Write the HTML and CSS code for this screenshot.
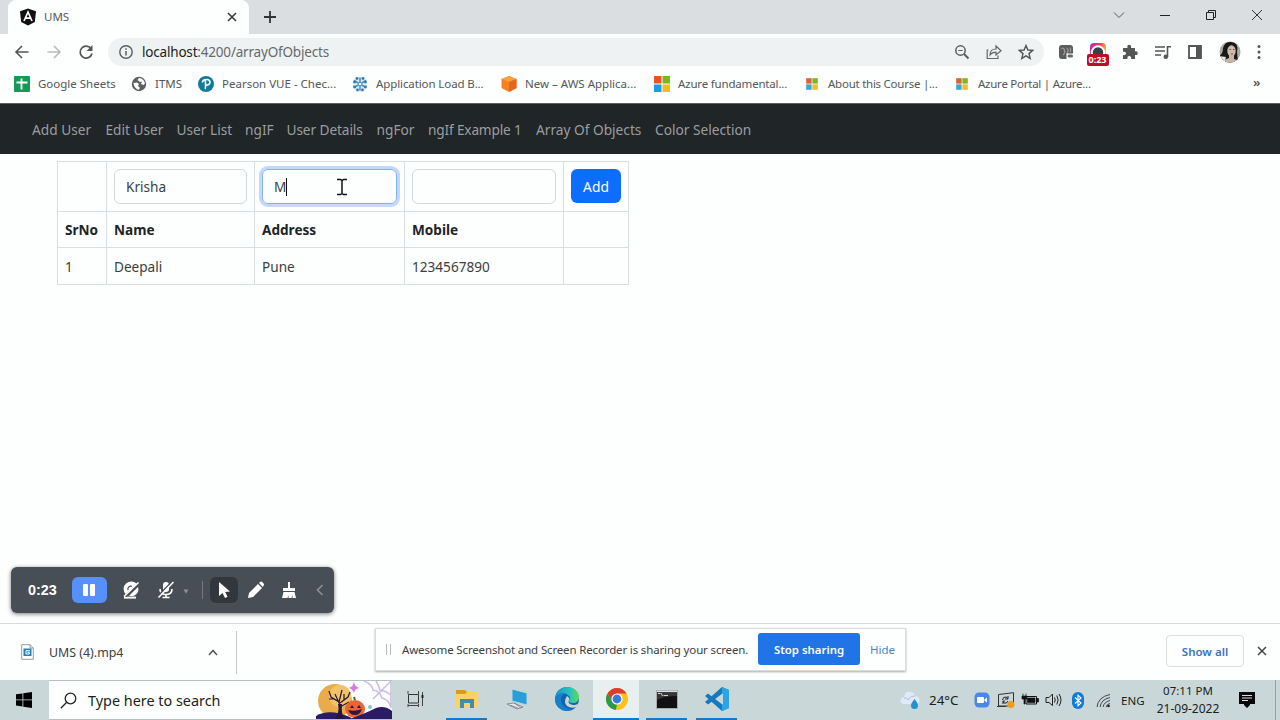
FILE: index.html
```html
<!DOCTYPE html>
<html lang="en">
<head>
    <meta charset="UTF-8">
    <meta name="viewport" content="width=device-width, initial-scale=1.0">
    <title>UMS</title>
    <link rel="stylesheet" href="styles.css">
</head>
<body>

    <div class="tabStrip">
        <div class="tab">
            <svg width="16" height="18" viewBox="0 0 16 18"><path d="M8 0.500L16 3.300L14.800 14L8 17.500L1.200 14L0 3.300Z" fill="#111"/><path d="M4 13L8 4L12 13M5.500 10.200H10.500" fill="none" stroke="#fff" stroke-width="1.700"/></svg>
            <span class="tabTitle">UMS</span>
            <svg width="10" height="10" viewBox="0 0 10 10"><path d="M1 1L9 9M9 1L1 9" stroke="#333" stroke-width="1.500"/></svg>
        </div>
        <svg class="newTab" width="14" height="14" viewBox="0 0 14 14"><path d="M7 1V13M1 7H13" stroke="#333" stroke-width="1.800"/></svg>
        <div class="windowButtons">
            <svg width="12" height="12" viewBox="0 0 12 12"><path d="M1 3.500L6 8.500L11 3.500" fill="none" stroke="#555"/></svg>
            <svg width="12" height="12" viewBox="0 0 12 12"><path d="M1 6.500H11" stroke="#222"/></svg>
            <svg width="12" height="12" viewBox="0 0 12 12"><path d="M1.500 3.500H8.500V10.500H1.500ZM3.500 3.500V1.500H10.500V8.500H8.500" fill="none" stroke="#222"/></svg>
            <svg width="12" height="12" viewBox="0 0 12 12"><path d="M1 1L11 11M11 1L1 11" stroke="#333"/></svg>
        </div>
    </div>

    <div class="toolbar">
        <svg width="16" height="16" viewBox="0 0 16 16"><path d="M14.500 8H2.500M8 2L2 8L8 14" fill="none" stroke="#555" stroke-width="1.600"/></svg>
        <svg width="16" height="16" viewBox="0 0 16 16"><path d="M1.500 8H13.500M8 2L14 8L8 14" fill="none" stroke="#b8bbbd" stroke-width="1.600"/></svg>
        <svg width="16" height="16" viewBox="0 0 16 16"><path d="M13 4.500A6 6 0 1 0 14 9.500" fill="none" stroke="#555" stroke-width="1.700"/><path d="M14.500 1V7H8.500Z" fill="#555"/></svg>
        <div class="addressBar">
            <svg width="16" height="16" viewBox="0 0 16 16"><circle cx="8" cy="8" r="6.200" fill="none" stroke="#5a5d60" stroke-width="1.400"/><path d="M8 7V11.500M8 4.300V5.800" stroke="#5a5d60" stroke-width="1.500"/></svg>
            <span class="url"><b>localhost</b>:4200/arrayOfObjects</span>
            <svg width="16" height="16" viewBox="0 0 16 16"><circle cx="6.500" cy="6.500" r="4.700" fill="none" stroke="#5a5d60" stroke-width="1.500"/><path d="M10 10L14.500 14.500" stroke="#5a5d60" stroke-width="1.900"/><path d="M4.300 6.500H8.700" stroke="#5a5d60"/></svg>
            <svg width="16" height="16" viewBox="0 0 16 16"><path d="M2.500 6H1.200V14.500H12V11.500M4 11C4 7 6.500 5 10 5V2L15 6.700L10 11V8.200C7.500 8.200 5.500 9 4 11Z" fill="none" stroke="#666" stroke-width="1.200"/></svg>
            <svg width="16" height="16" viewBox="0 0 16 16"><path d="M8 1.500L9.900 6L14.700 6.400L11 9.600L12.200 14.400L8 11.800L3.800 14.400L5 9.600L1.300 6.400L6.100 6Z" fill="none" stroke="#555" stroke-width="1.400"/></svg>
        </div>
        <div class="extensions">
            <svg width="16" height="16" viewBox="0 0 16 16"><rect x="1" y="1" width="14" height="14" rx="3" fill="#5c5c5c"/><path d="M3.500 5Q5.500 3 6.500 6T5 11M8.500 4Q11.500 5 9 10M12.500 3.500V8" fill="none" stroke="#999" stroke-width="1.300"/><rect x="8.500" y="9.500" width="7.500" height="6.500" fill="#fdfefe"/><rect x="9.500" y="10.500" width="5.500" height="3" rx="1.500" fill="#666"/></svg>
            <div class="recorder">
                <svg width="18" height="18" viewBox="0 0 18 18"><defs><linearGradient id="rec" x2="1" y2=".4"><stop stop-color="#b72bb4"/><stop offset=".55" stop-color="#e63b64"/><stop offset="1" stop-color="#ffb52c"/></linearGradient></defs><rect x="1" width="16" height="17" rx="4" fill="url(#rec)"/><circle cx="9" cy="9.500" r="7.200" fill="#fff"/><circle cx="9" cy="9.500" r="5.200" fill="#344"/></svg>
                <span class="recTime">0:23</span>
            </div>
            <svg width="16" height="16" viewBox="0 0 16 16"><path d="M1 4H5.500C4.800 1.800 6 .8 7.200 .8S9.700 1.800 9 4H13V7.500C15 7 15.700 8 15.700 9.200S15 11.500 13 11V15H9C9.500 12.800 8.500 12 7.200 12S5 13 5.500 15H1V11C3 11.500 4 10.500 4 9.300S3 7.300 1 7.800Z" fill="#555"/></svg>
            <svg width="18" height="16" viewBox="0 0 18 16"><path d="M1 3H11M1 7H11M1 11H7" stroke="#555" stroke-width="1.500"/><path d="M13.500 13V2.800H17" fill="none" stroke="#555" stroke-width="1.600"/><circle cx="11.800" cy="12.700" r="2.300" fill="#555"/></svg>
            <svg width="16" height="16" viewBox="0 0 16 16"><path d="M2 2H14V14H2Z" fill="none" stroke="#555" stroke-width="1.800"/><path d="M9 2H14V14H9Z" fill="#555"/></svg>
            <svg width="22" height="22" viewBox="0 0 22 22"><defs><clipPath id="face"><circle cx="11" cy="11" r="10.500"/></clipPath></defs><g clip-path="url(#face)"><rect width="22" height="22" fill="#aaa9a3"/><path d="M0 22V15Q4 13 4 7Q6 0 12 1Q20 1 18 11Q18 17 20 22Z" fill="#191918"/><ellipse cx="12.500" cy="10" rx="4.200" ry="5.800" fill="#d0b9ad"/><path d="M10 14H15V18L22 20V22H5V19L10 17Z" fill="#c9b5aa"/><path d="M0 15L7 16L5 22H0Z" fill="#e6e6e3"/><path d="M10.500 8.500H12M14 8.500H15.500M12 13H14" stroke="#654"/></g></svg>
            <svg width="6" height="16" viewBox="0 0 6 16"><circle cx="3" cy="2.500" r="1.500" fill="#555"/><circle cx="3" cy="8" r="1.500" fill="#555"/><circle cx="3" cy="13.500" r="1.500" fill="#555"/></svg>
        </div>
    </div>

    <div class="bookmarks">
        <div class="bookmark">
            <svg width="16" height="16" viewBox="0 0 16 16"><rect width="16" height="16" rx="1" fill="#159957"/><path d="M7.500 2.500V13.500M2.500 6.500H13.500" stroke="#fff" stroke-width="1.800"/></svg>
            <span>Google Sheets</span>
        </div>
        <div class="bookmark">
            <svg width="16" height="16" viewBox="0 0 16 16"><circle cx="8" cy="8" r="7.200" fill="#5c5f62"/><path d="M2.500 7L6 6.500L8 8L7 10L9 12L7.500 14Q3 12 2.500 7ZM8 2L6.500 4L9 6L11 5.500L10 8L12.500 9L14 7.500Q13 2.500 8 2Z" fill="#fff"/></svg>
            <span>ITMS</span>
        </div>
        <div class="bookmark">
            <svg width="16" height="16" viewBox="0 0 16 16"><circle cx="8" cy="8" r="8" fill="#137b9a"/><path d="M7 13Q8 12 7.300 4.500M4.500 6.500Q4.500 3.500 8.500 3.500Q12 3.500 12 6.300Q12 9.200 7.500 9.300" fill="none" stroke="#fff" stroke-width="1.600"/></svg>
            <span>Pearson VUE - Chec...</span>
        </div>
        <div class="bookmark">
            <svg width="16" height="16" viewBox="0 0 16 16"><circle cx="8" cy="8" r="7.500" fill="#d9eef6"/><path d="M8 1.500V14.500M2 4.500L14 11.500M14 4.500L2 11.500" stroke="#4c8ec3" stroke-width="1.600"/><g fill="#3977af"><circle cx="5" cy="2.500" r="1.400"/><circle cx="11" cy="2.500" r="1.400"/><circle cx="2.500" cy="6" r="1.400"/><circle cx="13.500" cy="6" r="1.400"/><circle cx="2.500" cy="11" r="1.400"/><circle cx="13.500" cy="11" r="1.400"/><circle cx="5.500" cy="14" r="1.400"/><circle cx="10.500" cy="14" r="1.400"/></g><circle cx="8" cy="8" r="1.300" fill="#fff"/></svg>
            <span class="tight">Application Load B...</span>
        </div>
        <div class="bookmark">
            <svg width="16" height="16" viewBox="0 0 16 16"><path d="M8 0L15.500 3V12L8 16L.5 12V3Z" fill="#f58220"/><path d="M8 0L15.500 3L8 6L.5 3Z" fill="#f7a044"/><path d="M8 6L15.500 3V12L8 16Z" fill="#e8651e"/></svg>
            <span>New – AWS Applica...</span>
        </div>
        <div class="bookmark">
            <svg width="16" height="16" viewBox="0 0 16 16"><path d="M0 0H7.500V7.500H0Z" fill="#e8532a"/><path d="M8.500 0H16V7.500H8.500Z" fill="#7fb71b"/><path d="M0 8.500H7.500V16H0Z" fill="#169fe2"/><path d="M8.500 8.500H16V16H8.500Z" fill="#f8b91b"/></svg>
            <span class="tighter">Azure fundamental...</span>
        </div>
        <div class="bookmark">
            <svg width="16" height="16" viewBox="-3 -3 22 22"><path d="M0 0H7.500V7.500H0Z" fill="#d9603b"/><path d="M8.500 0H16V7.500H8.500Z" fill="#7fb71b"/><path d="M0 8.500H7.500V16H0Z" fill="#3fa4d2"/><path d="M8.500 8.500H16V16H8.500Z" fill="#f0bc36"/></svg>
            <span class="tightest">About this Course |...</span>
        </div>
        <div class="bookmark">
            <svg width="16" height="16" viewBox="-3 -3 22 22"><path d="M0 0H7.500V7.500H0Z" fill="#d9603b"/><path d="M8.500 0H16V7.500H8.500Z" fill="#7fb71b"/><path d="M0 8.500H7.500V16H0Z" fill="#3fa4d2"/><path d="M8.500 8.500H16V16H8.500Z" fill="#f0bc36"/></svg>
            <span class="tightest">Azure Portal | Azure...</span>
        </div>
        <span class="moreBookmarks">»</span>
    </div>

    <div class="page">
        <nav class="navbar">
            <a>Add User</a>
            <a>Edit User</a>
            <a>User List</a>
            <a>ngIF</a>
            <a class="tight">User Details</a>
            <a>ngFor</a>
            <a class="tighter">ngIf Example 1</a>
            <a>Array Of Objects</a>
            <a>Color Selection</a>
        </nav>

        <table class="userTable">
            <colgroup><col class="colNo"><col class="colName"><col class="colAddress"><col class="colMobile"><col class="colAction"></colgroup>
            <tr class="rowForm">
                <td></td>
                <td><div class="field">Krisha</div></td>
                <td><div class="field focused">M<span class="caret"></span></div></td>
                <td><div class="field"></div></td>
                <td><button class="btnAdd">Add</button></td>
            </tr>
            <tr class="rowHead">
                <th>SrNo</th>
                <th>Name</th>
                <th>Address</th>
                <th>Mobile</th>
                <th></th>
            </tr>
            <tr class="rowData">
                <td>1</td>
                <td>Deepali</td>
                <td>Pune</td>
                <td>1234567890</td>
                <td></td>
            </tr>
        </table>

        <svg class="textCursor" width="12" height="18" viewBox="0 0 12 18"><path d="M1 1.500H4.500L6 2.500L7.500 1.500H11M6 2V16M1 16.500H4.500L6 15.500L7.500 16.500H11" fill="none" stroke="#111" stroke-width="1.500"/></svg>

        <div class="recordPanel">
            <span class="panelTime">0:23</span>
            <div class="pause"><i></i><i></i></div>
            <svg class="webcam" width="18" height="18" viewBox="0 0 18 18"><path d="M15 3A7 7 0 1 0 3.500 13Z" fill="#fff"/><path d="M16 6A7 7 0 0 1 7 14.800Z" fill="#fff"/><path d="M2 16.600H14" stroke="#fff" stroke-width="2"/><path d="M6 9A3 3 0 0 1 10 5.300M16.500 3L4 15.500" fill="none" stroke="#484e55" stroke-width="1.200"/><path d="M16.500 1.500L2 15.500" stroke="#fff" stroke-width="1.600"/></svg>
            <svg class="mic" width="18" height="18" viewBox="0 0 18 18"><rect x="6" y="1" width="6" height="10" rx="3" fill="#fff"/><path d="M3 8Q3 13.500 9 13.500Q15 13.500 15 8M9 13.500V17M5.500 16.500H12.500" fill="none" stroke="#fff" stroke-width="1.600"/><path d="M15.500 0L1 15" stroke="#484e55" stroke-width="1.500"/><path d="M16.500 1L1.500 16.500" stroke="#fff" stroke-width="1.600"/></svg>
            <svg class="micMenu" width="6" height="5" viewBox="0 0 6 5"><path d="M.5 .5H5.500L3 4.800Z" fill="#8d9196"/></svg>
            <i class="panelLine"></i>
            <div class="pointer"><svg width="14" height="18" viewBox="0 0 14 18"><path d="M2 1V15L5.500 12L8 17L10.500 15.800L8.200 11L13 10.500Z" fill="#fff"/></svg></div>
            <svg class="pencil" width="18" height="18" viewBox="0 0 18 18"><path d="M1 17L2 12L11 3L15 7L6 16ZM12 2L13.500 .7Q14.500 .3 15.500 1.300L16.800 2.700Q17.500 3.700 16.500 4.800L15.800 6Z" fill="#fff"/></svg>
            <svg class="broom" width="16" height="18" viewBox="0 0 16 18"><path d="M7 1H9V7H14V10H2V7H7ZM2.500 11H13.500L15 17H11.500V14L10.500 17H7.500V14L6.500 17H1Z" fill="#fff"/></svg>
            <svg class="collapse" width="8" height="12" viewBox="0 0 8 12"><path d="M6.500 1L1.500 6L6.500 11" fill="none" stroke="#8d9196" stroke-width="1.600"/></svg>
        </div>
    </div>

    <div class="downloads">
        <div class="download">
            <svg width="13" height="16" viewBox="0 0 13 16"><path d="M.7 .7H9L12.300 4V15.300H.7Z" fill="#fff" stroke="#9b9b9b"/><path d="M9 .7V4H12.300" fill="none" stroke="#9b9b9b"/><rect x="2.500" y="4.500" width="8" height="7.500" fill="#2184b8"/><path d="M9 6.700H5V10H8.300V8.300H6.500" fill="none" stroke="#fff"/></svg>
            <span class="fileName">UMS (4).mp4</span>
            <svg width="10" height="7" viewBox="0 0 10 7"><path d="M1 6L5 1.500L9 6" fill="none" stroke="#555" stroke-width="1.500"/></svg>
        </div>
        <button class="showAll">Show all</button>
        <svg class="closeBar" width="10" height="10" viewBox="0 0 10 10"><path d="M1 1L9 9M9 1L1 9" stroke="#444" stroke-width="1.500"/></svg>
        <div class="sharing">
            <i class="grip"></i>
            <span class="shareText">Awesome Screenshot and Screen Recorder is sharing your screen.</span>
            <button class="stopSharing">Stop sharing</button>
            <span class="hide">Hide</span>
        </div>
    </div>

    <div class="taskbar">
        <div class="start"><svg width="16" height="16" viewBox="0 0 16 16"><path d="M0 2.300L6.500 1.400V7.500H0ZM7.300 1.300L16 0V7.500H7.300ZM0 8.300H6.500V14.500L0 13.600ZM7.300 8.300H16V16L7.300 14.700Z"/></svg></div>
        <div class="search">
            <svg width="17" height="17" viewBox="0 0 17 17"><circle cx="10.500" cy="6.500" r="5.300" fill="none" stroke="#222" stroke-width="1.300"/><path d="M6.700 10.300L.8 16.200" stroke="#222" stroke-width="1.300"/></svg>
            <span class="searchText">Type here to search</span>
            <svg class="halloween" width="76" height="38" viewBox="316 681 76 38">
                <circle cx="335" cy="701" r="17" fill="#e8ac4b"/><circle cx="340" cy="696" r="11" fill="#f1c367"/>
                <path d="M316 716Q329 708 350 717L352 719H316Z" fill="#2d1a64"/>
                <path d="M338 718Q341 707 339 702L331 697L329 691M339 703L335 694M339 702L342 690M340 703L348 697L350 692M344 700V694M334 699H329M340 707L349 702" fill="none" stroke="#241640" stroke-width="1.200"/><path d="M335 719Q340 712 338 704H342Q341 713 344 719Z" fill="#241640"/>
                <ellipse cx="355" cy="709" rx="10" ry="9" fill="#ea6534"/><path d="M355 700L354 697" stroke="#44672c" stroke-width="2"/><path d="M350 708L352 705L354 708ZM357 708L359 705L361 708ZM348 710Q355 712 362 709Q360 715 355 715Q350 715 348 710Z" fill="#35163c"/>
                <path d="M354 682L355.500 686L359 688L355.500 689.500L354 693L352 689.500L349 688L352.500 686Z" fill="#d978e5"/>
                <path d="M364 681Q372 684 373 690Q380 691 382 698Q388 699 391 707M391 681L373 699M391 681V708M376 681Q379 686 380 690Q386 691 391 695" fill="none" stroke="#cbbbe0" stroke-width="1.500"/>
                <circle cx="370" cy="707" r="2" fill="#78c4cf"/><path d="M350 719Q366 713 376 708Q385 705 392 711V719Z" fill="#2d1a64"/>
            </svg>
        </div>
        <div class="apps">
            <div class="app"><svg width="18" height="18" viewBox="0 0 18 18"><path d="M2.500 4.500H12.500V13H2.500Z" fill="none" stroke="#333"/><path d="M2 1V4M12.500 1V4M2 14V17M12.500 14V17M2 15.500H12M16.500 2V16" stroke="#444"/><path d="M15.500 5H17.500V8H15.500Z" fill="#222"/></svg></div>
            <div class="app open"><svg width="22" height="20" viewBox="0 0 22 20"><path d="M0 1H9L11 3H22V19H0Z" fill="#ffd35d"/><path d="M0 1H9L11 3L9 5H0Z" fill="#d99b18"/><path d="M4 19V10H18V19H14V14H8V19Z" fill="#3e8db7"/></svg></div>
            <div class="app"><svg width="24" height="24" viewBox="0 0 24 24"><path d="M7 2L22 6V18L7 14Z" fill="#299ed8" stroke="#b7d8e5"/><path d="M2 17L9 16L18 20L12 22ZM5 18L13 21M9 16L16 21" fill="#e9eeee" stroke="#778" stroke-width=".8"/></svg></div>
            <div class="app"><svg width="24" height="24" viewBox="0 0 24 24"><defs><linearGradient id="edgeTop"><stop stop-color="#1694d1"/><stop offset=".6" stop-color="#24c4bd"/><stop offset="1" stop-color="#62d957"/></linearGradient></defs><circle cx="12" cy="12" r="12" fill="#1264b0"/><path d="M0 12C1 4 6 0 12 0C19 0 24 5 24 10.500C24 14 21 16 18 16Q13 16 14 13Q16 11 14 9Q11 5 5 7Q1 9 0 12Z" fill="url(#edgeTop)"/><path d="M0 12Q3 5 9 7Q4 11 7 17Q10 22 17 22Q13 25 8 23Q0 20 0 12Z" fill="#1681cb"/><path d="M12 9Q15 11 14 13Q12 17 18 18Q22 18 23 16L22 20Q16 22 12 19Q8 15 12 9Z" fill="#c9d5d7"/></svg></div>
            <div class="app open active"><svg width="22" height="22" viewBox="0 0 22 22"><circle cx="11" cy="11" r="11" fill="#fbc116"/><path d="M1.500 5.500A11 11 0 0 1 20.500 5.500H11L6.300 13.800Z" fill="#df3c30"/><path d="M1.500 5.500L6.300 13.800Q8 16.500 11 16.500L9.800 22A11 11 0 0 1 1.500 5.500Z" fill="#279b4b"/><circle cx="11" cy="11" r="5.600" fill="#fff"/><circle cx="11" cy="11" r="4.400" fill="#367be1"/></svg></div>
            <div class="app open"><svg width="22" height="19" viewBox="0 0 22 19"><rect x=".5" y=".5" width="21" height="18" fill="#111" stroke="#aaa"/><path d="M1 1.500H21" stroke="#ddd" stroke-width="1.500"/><path d="M2 3.500H4.500M5 3L6.500 6M7.500 5.500H12" stroke="#ccc"/><path d="M1 10Q8 6 21 6V3H1Z" fill="#fff" opacity=".16"/></svg></div>
            <div class="app open"><svg width="24" height="24" viewBox="0 0 24 24"><path d="M17 0L24 3V21L17 24L0 9L3 6.500L18 18V6L3 17.500L0 15Z" fill="#1579be"/><path d="M17 0L24 3V21L17 24V17.500L18 18V6L17 6.700Z" fill="#2ba5e5"/></svg></div>
        </div>
        <div class="tray">
            <svg class="cloud" width="20" height="20" viewBox="0 0 20 20"><path d="M3 14Q-1 12 1 9Q2 7 4 7Q5 1 10 2Q14 2 15 6Q20 7 19.500 11Q19 14 15 14Z" fill="#dfe9f7"/><path d="M4 8Q7 7 8 10Q11 5 15 6" fill="none" stroke="#a9bfe4"/><path d="M14.500 9Q18 13 18 15.500Q18 19 14.500 19Q11 19 11 15.500Q11 13 14.500 9Z" fill="#1c94d1"/></svg>
            <span class="degrees">24°C</span>
            <svg width="16" height="16" viewBox="0 0 16 16"><rect x=".5" y=".5" width="15" height="15" rx="4.500" fill="#4b86e8"/><rect x="3" y="5" width="7" height="6" rx="1" fill="#fff"/><path d="M10.500 7.500L13 5.500V10.500L10.500 8.800Z" fill="#fff"/></svg>
            <svg width="18" height="16" viewBox="0 0 18 16"><path d="M1.500 2.500L16.500 .7V14H1.500ZM0 14.500H9" fill="none" stroke="#333"/><path d="M5.500 8Q6 4.500 9 5L11 6.500M11 4V7H8M11 9Q10 12 7 11L6 9.500M6 12V9H8" fill="none" stroke="#222"/><circle cx="14" cy="12.500" r="3.500" fill="#f49a13"/></svg>
            <svg class="battery" width="18" height="16" viewBox="0 0 18 16"><path d="M5 4.500H15.500V12H5Z" fill="none" stroke="#111"/><path d="M6.500 6H14V10.500H6.500ZM16 6.500H17.500V10H16ZM1 4H6V7H4V12H3V7H1ZM2 1.500V4M5 1.500V4" fill="#111" stroke="#111" stroke-width=".7"/></svg>
            <svg class="speaker" width="17" height="16" viewBox="0 0 17 16"><path d="M1 5.500H4L7.500 2V13.500L4 10.500H1ZM9.500 5.500Q11 8 9.500 10.500M11.800 3.500Q14.500 8 11.800 12.500M14 2Q18 8 14 14" fill="none" stroke="#222"/></svg>
            <svg class="bluetooth" width="12" height="17" viewBox="0 0 12 17"><rect width="12" height="17" rx="6" fill="#117bd2"/><path d="M3 5.500L9 11L6 13.800V3.200L9 6L3 11.500" fill="none" stroke="#fff" stroke-width="1.100"/></svg>
            <svg class="wifi" width="15" height="15" viewBox="0 0 15 15"><path d="M1 14Q2 4 14 1.500M4 14Q5 6.500 14 4.500M7 14Q8 9 14 7.500M10 14Q11 11 14 10.500" fill="none" stroke="#444"/><circle cx="12.500" cy="13" r="1.300" fill="#222"/></svg>
            <span class="lang">ENG</span>
            <div class="clock"><span>07:11 PM</span><span class="date">21-09-2022</span></div>
            <svg class="notify" width="16" height="16" viewBox="0 0 16 16"><path d="M0 0H16V12H11V13L8 16L5 13V12H0Z" fill="#080808"/><path d="M3 3.500H13M3 6H13M3 8.500H9" stroke="#ddd"/></svg>
            <i class="desktopLine"></i>
        </div>
    </div>

</body>
</html>
```
FILE: styles.css
```css
* {
    box-sizing: border-box;
}

body {
    margin: 0;
    width: 1280px;
    height: 720px;
    overflow: hidden;
    display: flex;
    flex-direction: column;
    background-color: #fdfefe;
    font-family: "Noto Sans", "Open Sans", sans-serif;
    color: #3c4043;
    white-space: nowrap;
}

svg {
    display: block;
    flex: none;
}

button {
    font-family: inherit;
    padding: 0;
    border: none;
    white-space: nowrap;
}

.tight {
    letter-spacing: -0.1px;
}

.tighter {
    letter-spacing: -0.18px;
}

.tightest {
    letter-spacing: -0.25px;
}

.tabStrip {
    height: 34px;
    flex: none;
    display: flex;
    align-items: center;
    padding-left: 8px;
    background-color: #dadee1;
}

.tab {
    width: 241px;
    height: 34px;
    display: flex;
    align-items: center;
    padding: 0 12px;
    border-radius: 8px 8px 0 0;
    background-color: #fdfefe;
}

.tabTitle {
    flex-grow: 1;
    margin: -1px 0 0 8px;
    font-size: 11.5px;
    color: #55595c;
}

.newTab {
    margin-left: 14px;
}

.windowButtons {
    display: flex;
    gap: 34px;
    margin-left: auto;
    padding-right: 17px;
    padding-bottom: 5px;
}

.toolbar {
    height: 36px;
    flex: none;
    display: flex;
    align-items: center;
    gap: 16px;
    padding-left: 14px;
}

.addressBar {
    width: 936px;
    height: 28px;
    display: flex;
    align-items: center;
    gap: 16px;
    margin-left: -2px;
    padding: 0 10px;
    border-radius: 14px;
    background-color: #eff2f2;
}

.url {
    flex-grow: 1;
    margin: -1px 0 0 -8px;
    font-size: 13.5px;
    letter-spacing: -0.19px;
    color: #65696c;
}

.url b {
    font-weight: normal;
    color: #222;
}

.extensions {
    display: flex;
    align-items: center;
    gap: 15.5px;
    margin-left: -2px;
}

.recorder {
    position: relative;
    width: 17px;
    height: 18px;
}

.recorder svg {
    margin-left: -1px;
}

.recTime {
    position: absolute;
    left: -3px;
    top: 11px;
    width: 22px;
    height: 12px;
    border-radius: 2px;
    background-color: #c00d25;
    color: #fff;
    font-size: 9px;
    font-weight: bold;
    line-height: 12px;
    text-align: center;
}

.bookmarks {
    height: 34px;
    flex: none;
    display: grid;
    grid-template-columns: 117px 67px 154px 149px 153px 150px 150px 299px auto;
    align-items: center;
    padding: 0 0 6px 14px;
    border-bottom: 1px solid #5b5f61;
    font-size: 11.5px;
    color: #53575a;
}

.bookmark {
    display: flex;
    align-items: center;
    gap: 8px;
}

.moreBookmarks {
    margin-top: -3px;
    font-size: 13px;
    font-weight: 600;
}

.page {
    position: relative;
    height: 519px;
    flex: none;
    overflow: hidden;
}

.navbar {
    height: 50px;
    display: grid;
    grid-template-columns: 73.5px 71px 68.5px 41.500px 90px 51.500px 108px 119px auto;
    align-items: center;
    padding-left: 32px;
    background-color: #202527;
    color: #9b9e9f;
    font-size: 13.7px;
}

.userTable {
    width: 572px;
    margin: 7px 0 0 57px;
    table-layout: fixed;
    border-collapse: collapse;
    color: #3a3e40;
    font-size: 13.6px;
    line-height: 21px;
}

.colNo { width: 49px; }
.colName { width: 148px; }
.colAddress { width: 150px; }
.colMobile { width: 159px; }
.colAction { width: 65px; }

.rowForm { height: 50px; }
.rowHead { height: 36px; }
.rowData { height: 37px; }

.userTable td,
.userTable th {
    padding: 0 7px;
    border: 1px solid #d9dfe1;
    text-align: left;
}

.userTable th {
    color: #202427;
}

.field {
    height: 35px;
    display: flex;
    align-items: center;
    padding-left: 11px;
    border: 1px solid #d3d8df;
    border-radius: 6px;
}

.focused {
    border-color: #86b0f5;
    box-shadow: 0 0 0 3px #c4d8fa;
}

.caret {
    width: 1px;
    height: 18px;
    background-color: #111;
}

.btnAdd {
    display: block;
    width: 50px;
    height: 34px;
    margin-top: -1px;
    border-radius: 6px;
    background-color: #0d6efd;
    color: #fff;
    font-size: 13.8px;
}

.textCursor {
    position: absolute;
    left: 336px;
    top: 74px;
}

.recordPanel {
    position: absolute;
    left: 11px;
    top: 463px;
    width: 323px;
    height: 46px;
    display: flex;
    align-items: center;
    padding: 0 10px 0 17px;
    border-radius: 6px;
    background-color: #484e55;
    box-shadow: 0 1px 4px #777;
}

.panelTime {
    width: 44px;
    color: #fff;
    font-family: "Liberation Sans", sans-serif;
    font-size: 14.4px;
    font-weight: bold;
}

.pause {
    width: 36px;
    height: 26px;
    display: flex;
    align-items: center;
    justify-content: center;
    gap: 2px;
    border-radius: 6px;
    background-color: #5590fc;
}

.pause i {
    width: 5px;
    height: 12px;
    border-radius: 1px;
    background-color: #fff;
}

.webcam { margin-left: 15px; }
.mic { margin-left: 17px; }
.micMenu { margin: 2px 0 0 8px; }

.panelLine {
    width: 1px;
    height: 18px;
    margin-left: 13px;
    background-color: #747980;
}

.pointer {
    width: 28px;
    height: 26px;
    display: flex;
    align-items: center;
    justify-content: center;
    margin-left: 7px;
    border-radius: 6px;
    background-color: #32373d;
}

.pencil { margin-left: 9px; }
.broom { margin-left: 16px; }
.collapse { margin-left: 19px; }

.downloads {
    position: relative;
    height: 57px;
    flex: none;
    display: flex;
    align-items: center;
    border-top: 1px solid #d8dbdc;
}

.download {
    width: 237px;
    height: 43px;
    display: flex;
    align-items: center;
    padding: 0 18px 0 21px;
    border-right: 1px solid #c4c7c8;
}

.fileName {
    flex-grow: 1;
    margin-left: 15px;
    font-size: 12.4px;
}

.showAll {
    width: 78px;
    height: 32px;
    margin: -2px 0 0 929px;
    border: 1px solid #dcdfe2;
    border-radius: 4px;
    background-color: #fdfefe;
    color: #3973c9;
    font-size: 11.5px;
    font-weight: 600;
}

.closeBar {
    margin: -2px 0 0 13px;
}

.sharing {
    position: absolute;
    left: 375px;
    top: 4px;
    width: 531px;
    height: 43px;
    display: flex;
    align-items: center;
    padding: 0 0 1px 10px;
    border: 1px solid #d9dcdd;
    background-color: #fdfefe;
    box-shadow: 0 1px 2px #aaa;
}

.grip {
    width: 5px;
    height: 11px;
    border: solid #bbb;
    border-width: 0 1px;
}

.shareText {
    width: 357px;
    margin-left: 11px;
    font-size: 11.5px;
    letter-spacing: -0.15px;
}

.stopSharing {
    width: 102px;
    height: 32px;
    margin-left: -1px;
    border-radius: 3px;
    background-color: #2074e5;
    color: #fff;
    font-size: 11.4px;
    font-weight: 600;
}

.hide {
    margin-left: 10px;
    color: #4c82c9;
    font-size: 11.5px;
}

.taskbar {
    height: 40px;
    flex: none;
    display: flex;
    background-color: #c9d7d9;
    color: #1b1e20;
}

.start {
    width: 49px;
    display: flex;
    align-items: center;
    justify-content: center;
    padding-right: 1px;
}

.search {
    width: 343px;
    display: flex;
    align-items: center;
    padding-left: 11px;
    border: solid #b9c0c2;
    border-width: 1px 0;
    background-color: #fdfefe;
}

.searchText {
    width: 228px;
    margin-left: 11px;
    font-size: 14.4px;
}

.apps {
    display: flex;
    gap: 9px;
    padding-left: 4px;
}

.app {
    width: 41px;
    height: 40px;
    display: flex;
    align-items: center;
    justify-content: center;
    border-bottom: 2px solid transparent;
}

.app:first-child {
    padding-right: 3px;
}

.open {
    border-bottom-color: #1975c5;
}

.active {
    width: 46px;
    margin: 0 -2px 0 -3px;
    background-color: #e8efef;
}

.app:nth-child(n+2) svg {
    margin-left: 1px;
}

.tray {
    display: flex;
    align-items: center;
    margin-left: auto;
    gap: 7px;
}

.cloud {
    margin-right: 2px;
}

.degrees {
    width: 38px;
    font-size: 13.4px;
}

.battery {
    margin-left: -1px;
}

.speaker {
    margin-left: -1px;
}

.bluetooth {
    margin-left: 3px;
}

.wifi {
    margin-left: 5px;
}

.lang {
    width: 23px;
    margin-left: 3px;
    font-size: 11.5px;
}

.clock {
    width: 66px;
    display: flex;
    flex-direction: column;
    align-items: center;
    margin-left: 4px;
    font-size: 11.5px;
    line-height: 18px;
}

.date {
    font-size: 12px;
}

.notify {
    margin-left: 11px;
}

.desktopLine {
    width: 1px;
    height: 40px;
    margin: 0 4px 0 13px;
    background-color: #96a3a5;
}
```
